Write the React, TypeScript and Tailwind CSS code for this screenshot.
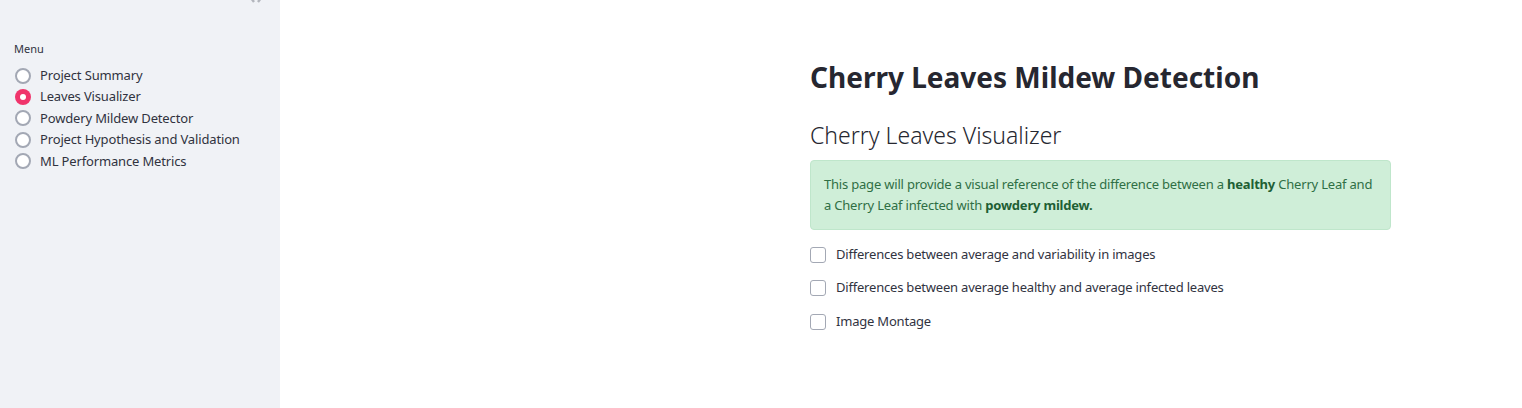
import React from "react";

const font = { fontFamily: '"Noto Sans", "Open Sans", sans-serif' };

const items = [
  "Project Summary",
  "Leaves Visualizer",
  "Powdery Mildew Detector",
  "Project Hypothesis and Validation",
  "ML Performance Metrics",
];

function Radio({ checked }: { checked: boolean }) {
  if (checked)
    return (
      <span className="flex h-[16px] w-[16px] items-center justify-center rounded-full bg-[#f0346b]">
        <span className="h-[6px] w-[6px] rounded-full bg-white" />
      </span>
    );
  return <span className="h-[16px] w-[16px] rounded-full border-2 border-[#a3a8b4] bg-white" />;
}

function Check({ label }: { label: string }) {
  return (
    <div className="flex h-[19px] items-center gap-[10px]">
      <span className="h-[16px] w-[16px] rounded-[3px] border border-[#a3a8b4] bg-white" />
      <span className="text-[13px] tracking-[-0.2px] text-[#31333f]">{label}</span>
    </div>
  );
}

export default function App() {
  return (
    <div className="flex h-[408px] w-[1522px] overflow-hidden bg-white" style={font}>
      <aside className="relative h-full w-[280px] shrink-0 bg-[#f0f2f6] text-[#31333f]">
        <svg className="absolute left-[249px] top-0" width="14" height="6" viewBox="0 0 14 6">
          <path d="M2 -2 L5 2 M12 -2 L9 2" stroke="#b3b6bd" strokeWidth="2.4" fill="none" />
        </svg>
        <div className="pl-[14px] pt-[41px]">
          <div className="mb-[10px] text-[11px]">Menu</div>
          <div className="flex flex-col gap-[5.4px] pl-[1px]">
            {items.map((t, i) => (
              <div key={t} className="flex h-[16px] items-center gap-[9px]">
                <Radio checked={i === 1} />
                <span className="text-[13px] leading-none tracking-[-0.15px]">{t}</span>
              </div>
            ))}
          </div>
        </div>
      </aside>
      <main className="flex-1 pl-[530px] pt-[58px] pr-[131px]">
        <h1 className="text-[28px] font-bold leading-[38px] text-[#262730]">Cherry Leaves Mildew Detection</h1>
        <h2 className="mt-[24px] text-[23px] font-light leading-[30px] text-[#262730]">Cherry Leaves Visualizer</h2>
        <div className="mt-[10px] rounded-[4px] border border-[#bfe6cb] bg-[#cfeed8] px-[13px] py-[13px] text-[13px] leading-[21px] tracking-[-0.2px] text-[#2f6f45]">
          This page will provide a visual reference of the difference between a{" "}
          <b className="text-[#1e5f34]">healthy</b> Cherry Leaf and a Cherry Leaf infected with{" "}
          <b className="text-[#1e5f34]">powdery mildew.</b>
        </div>
        <div className="mt-[15px] flex flex-col gap-[14.5px]">
          <Check label="Differences between average and variability in images" />
          <Check label="Differences between average healthy and average infected leaves" />
          <Check label="Image Montage" />
        </div>
      </main>
    </div>
  );
}
